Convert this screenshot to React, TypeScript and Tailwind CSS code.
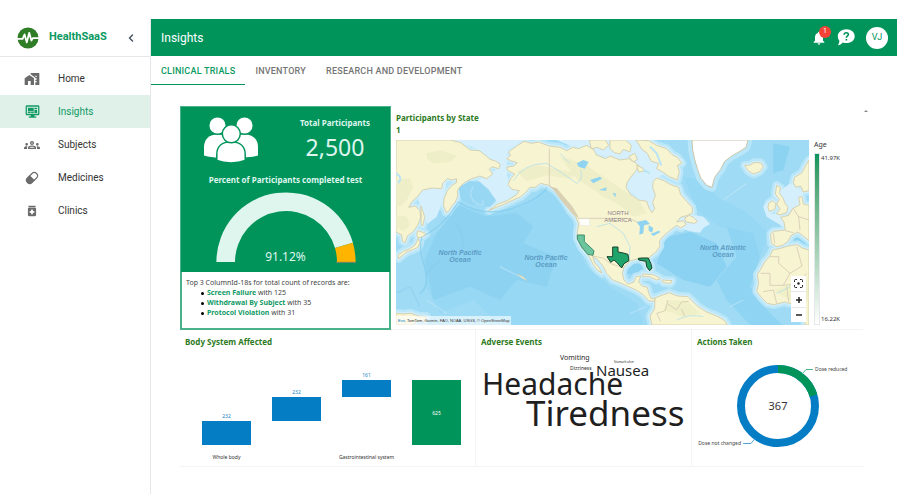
import { useState } from "react";
import type { ReactNode } from "react";
import { MdHomeWork, MdMedication, MdNotifications, MdOutlineGroups } from "react-icons/md";
import { LuChevronLeft } from "react-icons/lu";

const Logo = () => (
  <svg viewBox="0 0 22 22" className="h-[22px] w-[22px]">
    <circle cx="11" cy="11" r="10.5" fill="#2f7d27" />
    <path
      d="M0 11.8h5.6l2-4.4 2.2 8 2.4-9.6 2.2 7.8 1.4-2.4H22"
      fill="none"
      stroke="#fff"
      strokeWidth="1.8"
      strokeLinejoin="round"
    />
  </svg>
);

const InsightsIcon = () => (
  <svg viewBox="0 0 24 24" className="h-[15px] w-[15px]" fill="currentColor">
    <path
      fillRule="evenodd"
      d="M3 2h18a2 2 0 0 1 2 2v12a2 2 0 0 1-2 2h-6v2h3v2H6v-2h3v-2H3a2 2 0 0 1-2-2V4a2 2 0 0 1 2-2zm0 2.4v11.2h18V4.400z"
    />
    <path d="M4.600 6h9.400v5H4.600zM4.600 12h4.400v2.400H4.600zM9.800 12H14v2.400H9.800zM15 6h4.400v2.400H15zM15 9.400h4.400v5H15z" />
  </svg>
);

const PillIcon = () => (
  <svg viewBox="0 0 24 24" className="h-[14px] w-[14px]">
    <g transform="rotate(45 12 12)">
      <rect x="6.500" y="1" width="11" height="22" rx="5.500" fill="none" stroke="currentColor" strokeWidth="2" />
      <path d="M6.500 11.500h11V17.500a5.500 5.500 0 0 1-11 0z" fill="currentColor" />
    </g>
  </svg>
);

const HelpBubble = () => (
  <svg viewBox="0 0 18 17" className="h-[17px] w-[18px]">
    <path
      d="M9.4.3c4.8 0 8.3 3 8.3 6.9s-3.500 6.900-8.300 6.900c-1.300 0-2.500-.2-3.600-.7C4.500 14.900 2.800 16.200.8 16.300c1-1.200 1.500-2.900 1.600-4.600C1.300 10.500.8 8.900.8 7.200.8 3.300 4.600.3 9.400.3z"
      fill="#fff"
    />
    <path
      d="M7.200 5.700c0-1.200.9-2 2.100-2s2.100.7 2.100 1.800c0 1.400-2 1.600-2 3.200M9.400 9.900v1.500"
      fill="none"
      stroke="#00945b"
      strokeWidth="1.600"
    />
  </svg>
);

const PeopleIcon = () => (
  <svg viewBox="0 0 54 46" className="h-[46px] w-[54px]" fill="#fff" stroke="#00945b" strokeWidth="1.500">
    <path d="M0 38.500V30c0-8 5.500-12.500 13.500-12.500S27 22 27 30v9.500c-9 1.500-19 1.500-27-1z" stroke="none" />
    <path d="M27 39.500V30c0-8 5.500-12.500 13.500-12.500S54 22 54 30v8.500c-8 2.500-18 2.500-27 1z" stroke="none" />
    <circle cx="13.500" cy="8.500" r="8.800" />
    <circle cx="40.500" cy="8.500" r="8.800" />
    <path d="M12.800 43.500V37.500c0-8 5.200-12.700 14.200-12.700s14.200 4.700 14.200 12.700v6c-8.500 3.300-19.900 3.300-28.400 0z" />
    <circle cx="27.300" cy="16.800" r="9" />
  </svg>
);

const Gauge = () => (
  <svg viewBox="0 0 140 71" className="h-[71px] w-[140px]">
    <path d="M0.400 70A69.600 69.600 0 0 1 136.900 50.800L119 55.900A51 51 0 0 0 19 70z" fill="#dff6ee" />
    <path d="M136.900 50.800A69.600 69.600 0 0 1 139.600 70H121A51 51 0 0 0 119 55.900z" fill="#ffb400" />
    <path d="M120 70.300h20" stroke="#8a8166" strokeWidth="1" />
  </svg>
);

const LAND = [
  // east asia and kamchatka
  "M18 120H182L212 128 240 150 268 152 286 166 300 178 318 184 331 193 326 206 306 200 298 208 308 222 290 236 270 228 245 236 226 246 212 258 202 272 203 288 196 306 184 320 176 334 168 337 161 318 162 296 172 272 186 256 199 248 200 236 186 240 172 236 158 250 155 266 126 264 98 270 84 288 66 305 56 322 76 318 90 332 92 352 84 374 70 394 52 408 46 428 38 424 34 404 18 396Z",
  "M92 318L99 334 104 352 98 378 93 372 94 350Z",
  "M83 392L96 396 108 402 98 410 84 414 80 404Z",
  "M84 416L90 428 84 442 66 450 50 456 40 464 26 476 24 466 40 454 60 446 76 434Z",
  "M18 640L40 642 62 640 86 648 110 650 104 664 84 660 70 675H18Z",
  // north and central america
  "M356 156L380 138 402 124 426 130 446 126 476 138 510 142 530 152 548 142 566 146 590 136 612 150 618 164 646 176 660 168 690 180 716 176 732 186 746 196 738 212 722 232 712 246 708 262 722 284 746 300 770 304 778 326 786 338 794 326 788 308 796 286 788 262 790 244 800 234 822 242 842 254 866 262 872 284 890 304 906 322 908 338 892 346 872 352 860 366 880 362 888 374 872 384 860 376 844 388 832 398 820 408 808 424 810 438 798 456 780 470 774 480 782 496 784 510 774 508 766 486 746 476 722 482 712 492 702 500 697 520 702 540 714 552 732 546 738 530 752 528 746 546 756 558 772 562 776 580 784 596 796 594 792 604 776 602 760 584 742 572 716 560 690 548 668 540 650 520 640 500 622 478 608 470 614 488 628 504 636 520 622 510 610 494 600 474 592 462 576 444 562 416 562 396 566 372 558 352 540 332 526 308 512 288 496 270 476 256 452 250 436 262 420 262 408 276 392 290 370 300 344 312 318 322 296 332 320 314 352 302 380 284 388 272 366 268 354 254 362 236 374 222 354 212 350 202 372 198 382 188 362 182 350 176 362 166Z",
  // arctic islands
  "M738 120L776 122 800 136 830 146 846 164 862 172 876 190 862 196 868 214 862 240 838 230 818 216 800 206 806 190 784 184 772 160 756 148Z",
  "M598 120H646L656 136 640 150 622 142 604 146Z",
  "M660 120H706L724 136 720 156 700 148 690 162 674 158 660 146Z",
  "M716 170L734 160 742 178 730 186Z",
  "M740 196L758 204 762 214 746 216Z",
  "M884 354L898 346 910 352 922 364 914 370 888 366Z",
  "M758 522L790 524 812 536 800 540 778 530 758 530Z",
  "M816 540L846 542 842 550 820 548Z",
  // south america
  "M795 594L810 588 838 578 862 588 894 590 906 602 924 620 950 636 980 648 1002 660 1012 675H786L780 648 794 626Z",
  // iceland, britain, ireland
  "M1064 196L1078 196 1092 188 1112 188 1120 200 1110 214 1092 222 1076 214Z",
  "M1160 256L1172 264 1168 278 1180 296 1184 308 1194 322 1190 338 1172 344 1160 342 1170 326 1160 312 1168 298 1156 282Z",
  "M1136 310L1148 302 1158 312 1154 328 1138 334 1134 322Z",
  // scandinavia, continent, africa
  "M1257 180L1246 198 1236 218 1214 232 1210 248 1218 262 1232 258 1240 276 1257 272Z",
  "M1257 316L1240 312 1236 290 1226 292 1230 314 1208 326 1196 346 1172 352 1182 366 1186 390 1150 394 1142 402 1144 430 1160 440 1178 436 1194 424 1204 406 1224 396 1240 408 1257 422Z",
  "M1257 450L1236 444 1222 434 1196 438 1168 446 1148 450 1140 468 1124 486 1112 508 1102 524 1106 548 1100 574 1114 592 1132 610 1152 614 1184 606 1206 612 1228 626 1238 646 1246 675H1257Z",
];

const GREENLAND =
  "M906 120H1074L1068 142 1050 154 1028 166 1004 184 992 208 974 232 966 262 950 256 932 234 922 206 914 178 908 150Z";

const INLAND = [
  "M110 160L150 150 200 168 180 186 130 190 112 178Z",
  "M18 240L60 234 70 260 50 300 30 320 18 316Z",
  "M18 345L50 350 60 376 40 394 18 380Z",
  "M380 214L440 196 500 206 560 220 540 236 470 226 410 244Z",
  "M510 170L580 190 640 230 700 270 750 306 770 340 730 350 690 316 640 290 600 262 560 236Z",
  "M830 600L890 604 930 640 880 650 820 630Z",
  "M1150 570L1250 540 1257 600 1200 600Z",
];

const BORDERS =
  "M478 146V258L500 272M565 355H690L720 356 742 366M606 468L640 474 660 490 690 500M1140 470H1166V490L1200 520 1236 498 1220 440M1112 520H1140V556H1180L1200 520M1120 575L1150 570 1160 610M1180 556L1220 552 1250 520M1190 560L1196 606M1150 398L1154 430M1186 392L1210 398M1210 326L1226 350 1257 360M1226 350L1230 390M800 640L826 632 834 600M834 612L860 630 874 606 896 604M874 626L884 648M800 640L812 664";

const WorldMap = () => (
  <svg viewBox="0 0 413 185" className="block w-full" role="img" aria-label="Map of participants by state">
    <g transform="scale(.33333) translate(-18 -120)">
      <rect x="18" y="120" width="1240" height="556" fill="#a0dbf5" />
      {/* deep basins */}
      <path d="M205 306L250 328 300 342 380 326 430 296 464 268 500 290 548 350 556 420 590 500 660 560 740 610 760 675H330L250 600 150 640 110 560 96 430 160 380Z" fill="#97d8f4" />
      <path d="M206 316L290 350 380 338 430 380 400 430 500 470 470 560 380 540 330 600 240 560 130 600 104 480 140 400Z" fill="#8dd2f1" />
      <path d="M830 410L900 396 980 430 1010 500 960 560 880 540 800 490Z" fill="#8bd1f1" />
      <path d="M880 230L940 240 980 290 1060 330 1140 400 1110 470 1060 400 990 380 920 330Z" fill="#97d8f4" />
      <path d="M1010 380L1090 400 1110 470 1080 560 1140 640 1180 675H1080L1010 600 980 540 1040 470Z" fill="#8fd4f2" />
      <path d="M1150 130L1200 140 1180 210 1150 220Z" fill="#8cd2f1" />
      <path d="M700 520L740 480 770 510 740 526Z M1180 440L1220 400 1257 426V446L1230 430Z" fill="#8cd2f1" />
      <g stroke="#b9e6f8" strokeLinejoin="round" fill="none">
        {[...LAND, GREENLAND].map((d) => (
          <path key={d} d={d} strokeWidth="26" />
        ))}
      </g>
      <g stroke="#cfeefb" strokeLinejoin="round" fill="none">
        {LAND.map((d) => (
          <path key={d} d={d} strokeWidth="12" />
        ))}
      </g>
      {/* shallow seas */}
      <path d="M190 120H400L352 150 350 210 356 262 382 276 344 304 322 308 296 268 262 240 300 226 330 196 270 150ZM98 270L170 240 160 300 140 350 112 372 100 330 84 300ZM500 120H740V200L620 160 548 140ZM740 120H780L880 180 800 236 790 340 710 262 740 200ZM1150 290L1200 250 1240 276 1232 312 1190 340 1182 300ZM1120 320L1136 300 1140 340 1190 350 1180 380 1130 350ZM880 340L940 350 960 372 940 384 930 398 900 394 860 380Z" fill="#d5f0fc" />
      <path d="M206 262L240 242 270 246 300 280 318 300 300 320 240 314 212 298Z" fill="#97d7f4" />
      <g fill="none" stroke="#7fcaee" strokeWidth="4" opacity=".7">
        <path d="M205 306Q290 356 376 322T470 262M205 306Q160 380 96 410Q84 450 104 500Q120 560 90 580" />
        <path d="M18 580L60 560 90 620M200 370Q230 420 212 460M150 480L110 520" opacity=".5" />
      </g>
      <g fill="none" stroke="#bde6f9" strokeWidth="4" opacity=".6">
        <path d="M250 260Q230 290 262 312Q290 320 276 300M110 600L170 640M330 500L410 540M720 640L770 620M1000 300L1070 250M1020 620L1060 600" />
      </g>
      <g fill="#f7f4d1" stroke="#d3caa6" strokeWidth="2.500" strokeLinejoin="round">
        {LAND.map((d) => (
          <path key={d} d={d} />
        ))}
      </g>
      <g fill="#ecefc6" opacity=".8">
        {INLAND.map((d) => (
          <path key={d} d={d} />
        ))}
      </g>
      <path d="M484 262L500 264 520 288 546 318 562 344 566 356 548 340 524 314Z" fill="#d9d0b3" />
      <path d={GREENLAND} fill="#fff" stroke="#cdc5a8" strokeWidth="3" />
      <path d="M560 190L580 180 596 186 584 206 566 200ZM600 240L630 230 636 236 610 250ZM626 270L650 262 648 272ZM740 366L768 360 780 372 762 376 760 400 748 404 750 380ZM776 376L790 384 786 398 776 392ZM782 402L806 392 812 396 790 408ZM668 280L678 280 676 292Z" fill="#8fd3f0" />
      <path d="M780 140L800 160 814 196M760 210L780 220M18 220Q40 232 24 250" fill="none" stroke="#b9e4f5" strokeWidth="6" />
      <path d="M370 242Q400 190 470 190 520 220 560 250 580 240 572 210M510 160L540 190M620 380L660 370 700 400 720 440 718 476M860 660Q900 640 940 650M1160 580L1200 560" fill="none" stroke="#a9dcee" strokeWidth="2" />
      <path d="M382 522L400 530 410 542 396 534Z" fill="#f0e7c6" stroke="#cfc39a" />
      <path d={BORDERS} fill="none" stroke="#cdbfae" strokeWidth="2" />
      <path d="M566 356H599V378L570 376Z" fill="#fdfdfa" stroke="#d8d4cc" />
      <path d="M562 405H583V425L612 452 609 466 593 463 575 441 562 417Z" fill="#6cc59c" stroke="#3c8f6c" strokeWidth="3" />
      <path d="M668 441H684V456L700 459 714 463 717 482 702 491 695 504 682 489 672 480 662 487 651 470H668Z" fill="#1fa56c" stroke="#17402f" strokeWidth="3" />
      <path d="M745 475L756 474 775 474 783 492 786 504 779 512 770 500 768 484 746 480Z" fill="#1fa56c" stroke="#17402f" strokeWidth="3" />
    </g>
    <g className="font-['Liberation_Sans',sans-serif] text-[7px] font-bold italic" fill="#5c9cc5" textAnchor="middle">
      <text x="64" y="115">North Pacific</text>
      <text x="64" y="122">Ocean</text>
      <text x="150" y="120">North Pacific</text>
      <text x="150" y="127">Ocean</text>
      <text x="327" y="110">North Atlantic</text>
      <text x="327" y="117">Ocean</text>
    </g>
    <g className="font-['Liberation_Sans',sans-serif] text-[6px]" fill="#8d8189" textAnchor="middle">
      <text x="222" y="75">NORTH</text>
      <text x="222" y="82">AMERICA</text>
    </g>
  </svg>
);

const Donut = () => (
  <svg viewBox="0 0 171 100" className="mx-auto block w-[171px]" role="img" aria-label="Actions taken">
    <circle cx="86" cy="50" r="37" fill="none" stroke="#047dc5" strokeWidth="8" />
    <path d="M86 13A37 37 0 0 1 121.500 39.700" fill="none" stroke="#00945b" strokeWidth="8" />
    <path d="M110 18L114 13.500H121" fill="none" stroke="#4db58c" strokeWidth="1" />
    <path d="M51 87.500H59L63 82.500" fill="none" stroke="#4fa3d6" strokeWidth="1" />
    <text x="86" y="54" textAnchor="middle" className="text-[11px]" fill="#333">367</text>
    <text x="123" y="15" className="text-[5px]" fill="#444">Dose reduced</text>
    <text x="49" y="89" textAnchor="end" className="text-[5px]" fill="#444">Dose not changed</text>
  </svg>
);

const navItems: { label: string; icon: ReactNode }[] = [
  { label: "Home", icon: <MdHomeWork size={16} /> },
  { label: "Insights", icon: <InsightsIcon /> },
  { label: "Subjects", icon: <MdOutlineGroups size={16} /> },
  { label: "Medicines", icon: <PillIcon /> },
  { label: "Clinics", icon: <MdMedication size={14} /> },
];

const tabs = ["Clinical Trials", "Inventory", "Research and Development"];

const records = [
  { name: "Screen Failure", count: 125 },
  { name: "Withdrawal By Subject", count: 35 },
  { name: "Protocol Violation", count: 31 },
];

const bars = [
  { label: "Whole body", value: 232, start: 0 },
  { label: "", value: 232, start: 232 },
  { label: "Gastrointestinal system", value: 161, start: 464 },
  { label: "", value: 625, start: 0, total: true },
];

// pixels per record in the waterfall chart
const BAR_SCALE = 65 / 625;

const PanelTitle = ({ children }: { children: ReactNode }) => (
  <h2 className="text-[8px] leading-3 font-bold text-[#2c7a1c]">{children}</h2>
);

const Sidebar = () => {
  const [active, setActive] = useState("Insights");

  return (
    <aside className="w-[151px] shrink-0 border-r border-gray-200 bg-white">
      <div className="flex h-[38px] items-center border-b border-gray-200 pl-[17px]">
        <Logo />
        <span className="ml-[10px] text-[11px] font-bold text-[#0a9961]">HealthSaaS</span>
        <button type="button" aria-label="Collapse menu" className="mr-[13px] ml-auto text-gray-600">
          <LuChevronLeft size={12} strokeWidth={3} />
        </button>
      </div>
      <nav className="pt-[5px]">
        {navItems.map((item) => (
          <a
            key={item.label}
            href="#"
            onClick={() => setActive(item.label)}
            className={
              "flex h-[33px] items-center text-[10px] " +
              (item.label === active ? "bg-[#e0f1e9] text-[#0f9a64]" : "text-[#333]")
            }
          >
            <span
              className={
                "ml-[22px] flex w-5 justify-center " + (item.label === active ? "text-[#0f9a64]" : "text-[#6b6b6b]")
              }
            >
              {item.icon}
            </span>
            <span className="ml-4">{item.label}</span>
          </a>
        ))}
      </nav>
    </aside>
  );
};

const TopBar = () => (
  <header className="flex h-[37px] items-center bg-[#00945b] pr-[9px] pl-[10px] text-white">
    <h1 className="text-[12px]">Insights</h1>
    <button type="button" aria-label="Notifications" className="relative ml-auto">
      <MdNotifications size={16} />
      <span className="absolute -top-1 left-2 flex h-3 w-3 items-center justify-center rounded-full bg-[#f44336] text-[7px]">
        1
      </span>
    </button>
    <button type="button" aria-label="Help" className="ml-[10px]">
      <HelpBubble />
    </button>
    <button
      type="button"
      className="ml-[11px] flex h-[22px] w-[22px] items-center justify-center rounded-full bg-white text-[9px] text-[#00945b]"
    >
      VJ
    </button>
  </header>
);

const ParticipantsCard = () => (
  <section className="flex flex-col border-2 border-[#4bb18a] bg-white">
    <div className="-mx-px -mt-px flex h-[165px] flex-col items-center bg-[#00945b] text-[#dff6ee]">
      <div className="mt-[10px] flex w-full items-start justify-between pr-5 pl-[23px]">
        <PeopleIcon />
        <div className="text-center">
          <h2 className="text-[8px] leading-3 font-bold">Total Participants</h2>
          <p className="mt-1 text-[23px] leading-7">2,500</p>
        </div>
      </div>
      <h2 className="mt-[11px] text-[8px] leading-3 font-bold">Percent of Participants completed test</h2>
      <div className="relative mt-[6px]">
        <Gauge />
        <p className="absolute inset-x-0 -bottom-px text-center text-[12px] leading-[14px]">91.12%</p>
      </div>
    </div>
    <div className="h-[56px] px-1 pt-[6px] text-[7px] leading-[10px] text-[#444]">
      <p>Top 3 ColumnId-18s for total count of records are:</p>
      <ul className="pl-[15px]">
        {records.map((record) => (
          <li key={record.name} className="flex items-center">
            <span className="mr-[3px] h-[3px] w-[3px] rounded-full bg-black" />
            <span>
              <b className="text-[#0f9a64]">{record.name}</b> with {record.count}
            </span>
          </li>
        ))}
      </ul>
    </div>
  </section>
);

const MapPanel = () => (
  <section className="border-b border-gray-100 pt-[6px] pl-[5px]">
    <PanelTitle>Participants by State</PanelTitle>
    <p className="text-[8px] leading-[11px] font-bold text-[#2c7a1c]">1</p>
    <div className="mt-[5px] flex">
      <div className="relative flex-1">
        <WorldMap />
        <p className="absolute bottom-0 left-0 bg-white/60 px-[2px] font-['Liberation_Sans',sans-serif] text-[4px] leading-[9px] text-[#333]">
          <a href="#" className="text-[#0079c1]">Esri</a>, TomTom, Garmin, FAO, NOAA, USGS, © OpenStreetMap
        </p>
        <div className="absolute right-[3px] bottom-[3px] flex w-[15px] flex-col gap-px bg-gray-200 text-[#222]">
          <button type="button" aria-label="Fit to view" className="flex h-[15px] items-center justify-center bg-white">
            <svg viewBox="0 0 9 9" className="h-[9px] w-[9px]" fill="none" stroke="currentColor">
              <path d="M.5 3V1.500a1 1 0 0 1 1-1H3M6 .5h1.500a1 1 0 0 1 1 1V3M8.500 6v1.500a1 1 0 0 1-1 1H6M3 8.500H1.500a1 1 0 0 1-1-1V6" />
              <circle cx="4.500" cy="4.500" r="1.200" fill="currentColor" stroke="none" />
            </svg>
          </button>
          <button type="button" aria-label="Zoom in" className="flex h-[15px] items-center justify-center bg-white">
            <svg viewBox="0 0 6 6" className="h-[6px] w-[6px]" stroke="currentColor" strokeWidth="1.500">
              <path d="M0 3h6M3 0v6" />
            </svg>
          </button>
          <button type="button" aria-label="Zoom out" className="flex h-[14px] items-center justify-center bg-white">
            <svg viewBox="0 0 6 6" className="h-[6px] w-[6px]" stroke="currentColor" strokeWidth="1.500">
              <path d="M0 3h6" />
            </svg>
          </button>
        </div>
      </div>
      <div className="ml-[5px] flex w-[49px] flex-col text-[#333]">
        <h3 className="text-[7px] leading-[9px]">Age</h3>
        <div className="mt-1 flex flex-1 gap-px">
          <div className="w-[6px] border border-gray-200 bg-linear-to-b from-[#00945b] to-white" />
          <div className="flex flex-col justify-between text-[6px] leading-[11px]">
            <span>41.97K</span>
            <span>16.22K</span>
          </div>
        </div>
      </div>
    </div>
  </section>
);

const BodySystemPanel = () => (
  <section className="border-r border-b border-gray-100 pt-[6px]">
    <div className="pl-[5px]">
      <PanelTitle>Body System Affected</PanelTitle>
    </div>
    <div className="mt-[10px] grid grid-cols-4 gap-[21px] pr-[14px] pl-[22px] text-[5px] leading-[6px]">
      {bars.map((bar, i) => (
        <div key={i} className="flex h-[102px] flex-col items-center justify-end">
          {!bar.total && <span className="mb-[2px] text-[#1583c6]">{bar.value}</span>}
          <div
            className={
              "flex w-full items-center justify-center text-white " + (bar.total ? "bg-[#00945b]" : "bg-[#047dc5]")
            }
            style={{
              height: Math.round(bar.value * BAR_SCALE),
              marginBottom: Math.round(bar.start * BAR_SCALE),
            }}
          >
            {bar.total && bar.value}
          </div>
          <span className="mt-[9px] h-[6px] whitespace-nowrap text-[#333]">{bar.label}</span>
        </div>
      ))}
    </div>
  </section>
);

const AdverseEventsPanel = () => (
  <section className="border-r border-b border-gray-100 pt-[6px] pl-[5px]">
    <PanelTitle>Adverse Events</PanelTitle>
    <div className="relative h-[80px] w-[210px] leading-none whitespace-nowrap text-[#1f1f1f]">
      <span className="absolute top-[6px] left-[79px] text-[7px]">Vomiting</span>
      <span className="absolute top-[18px] left-[89px] text-[5px]">Dizziness</span>
      <span className="absolute top-[13px] left-[133px] text-[3px]">Stomach ulcer</span>
      <span className="absolute top-[15px] left-[115px] text-[15px]">Nausea</span>
      <span className="absolute top-[21px] left-[1px] text-[30px]">Headache</span>
      <span className="absolute top-[47px] left-[45px] text-[35px]">Tiredness</span>
    </div>
  </section>
);

const ActionsPanel = () => (
  <section className="border-b border-gray-100 pt-[6px] pb-[10px]">
    <div className="pl-[5px]">
      <PanelTitle>Actions Taken</PanelTitle>
    </div>
    <div className="mt-2">
      <Donut />
    </div>
  </section>
);

const App = () => {
  const [tab, setTab] = useState(tabs[0]);

  return (
    <div className="flex min-h-screen bg-white pt-[19px] pb-1 font-['Roboto',sans-serif] antialiased">
      <Sidebar />
      <div className="min-w-0 flex-1">
        <TopBar />
        <div className="flex text-[9px] font-medium tracking-wide uppercase">
          {tabs.map((name) => (
            <button
              key={name}
              type="button"
              onClick={() => setTab(name)}
              className={
                "h-[29px] border-b px-[10px] pt-1 uppercase " +
                (name === tab ? "border-[#00945b] text-[#0a9961]" : "border-transparent text-[#757575]")
              }
            >
              {name}
            </button>
          ))}
        </div>
        <main className="relative mt-[21px] mr-[34px] ml-[29px] font-['Noto_Sans',sans-serif]">
          <button type="button" aria-label="Collapse panel" className="absolute top-1 -right-[5px] flex">
            <svg viewBox="0 0 4 2" className="h-[2px] w-[4px]" fill="#888">
              <path d="M0 2L2 0l2 2z" />
            </svg>
          </button>
          <div className="grid grid-cols-[211fr_472fr]">
            <ParticipantsCard />
            <MapPanel />
          </div>
          <div className="grid grid-cols-[296fr_216fr_171fr]">
            <BodySystemPanel />
            <AdverseEventsPanel />
            <ActionsPanel />
          </div>
        </main>
      </div>
    </div>
  );
};

export default App;
